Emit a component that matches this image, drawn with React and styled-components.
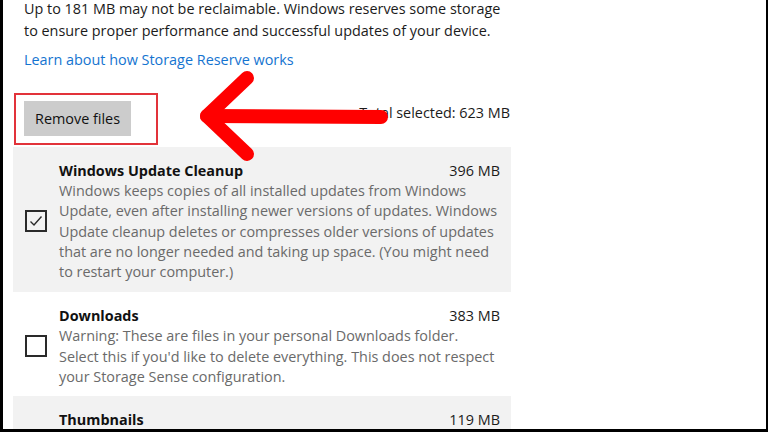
import React from "react";
import styled, { createGlobalStyle } from "styled-components";

const Global = createGlobalStyle`
  html, body { margin: 0; padding: 0; background: #fff; }
  body { font-family: "Open Sans", "Noto Sans", Arial, sans-serif; }
`;

const Frame = styled.div`
  width: 768px;
  height: 432px;
  box-sizing: border-box;
  border-left: 3px solid #000;
  border-right: 2px solid #000;
  border-bottom: 3px solid #000;
  background: #fff;
  overflow: hidden;
  position: relative;
`;

const Column = styled.div`
  width: 498px;
  margin-left: 10px;
  display: flex;
  flex-direction: column;
`;

const Intro = styled.p`
  margin: -2px 0 0;
  padding: 0 11px;
  font-size: 14.4px;
  line-height: 22px;
  color: #1b1b1b;
  white-space: nowrap;
`;

const Link = styled.a`
  margin: 7px 0 0 11px;
  font-size: 14.4px;
  line-height: 22px;
  color: #1574d0;
  text-decoration: none;
  align-self: flex-start;
`;

const ActionRow = styled.div`
  display: flex;
  justify-content: space-between;
  align-items: flex-start;
  margin-top: 22px;
`;

const Highlight = styled.div`
  margin-left: 1px;
  border: 2px solid #e2333a;
  padding: 6px 25px 7px 8px;
`;

const Button = styled.button`
  display: block;
  width: 107px;
  height: 35px;
  border: none;
  background: #cccccc;
  font-family: inherit;
  font-size: 14.4px;
  color: #111;
  padding: 0;
`;

const Total = styled.div`
  margin-top: 9px;
  margin-right: 1px;
  font-size: 14.4px;
  line-height: 22px;
  color: #1b1b1b;
  white-space: nowrap;
`;

const Item = styled.div`
  display: grid;
  grid-template-columns: 22px 1fr;
  column-gap: 12px;
  align-items: center;
  padding: ${(p) => p.$pt}px 11px ${(p) => p.$pb}px 12px;
  background: ${(p) => (p.$shaded ? "#f2f2f2" : "#fff")};
  margin-top: ${(p) => p.$mt || 0}px;
`;

const Box = styled.div`
  width: 22px;
  height: 22px;
  box-sizing: border-box;
  border: 2px solid #2a2a2a;
  display: flex;
  align-items: center;
  justify-content: center;
`;

const Body = styled.div`
  display: flex;
  flex-direction: column;
  min-height: ${(p) => p.$minH || 0}px;
`;

const Head = styled.div`
  display: flex;
  justify-content: space-between;
  align-items: baseline;
`;

const Title = styled.span`
  font-size: 14.4px;
  font-weight: 700;
  line-height: 21px;
  color: #111;
`;

const Size = styled.span`
  font-size: 14.4px;
  line-height: 21px;
  color: #1b1b1b;
`;

const Desc = styled.p`
  margin: 0;
  font-size: 14.4px;
  line-height: 20.3px;
  color: #6a6a6a;
  white-space: nowrap;
`;

const ArrowOverlay = styled.svg`
  position: absolute;
  left: 190px;
  top: 68px;
  width: 200px;
  height: 96px;
  overflow: visible;
`;

function CheckBox({ checked }) {
  return (
    <Box>
      {checked && (
        <svg width="14" height="12" viewBox="0 0 14 12">
          <path d="M1.5 6.5 L5 10 L12.5 1.5" fill="none" stroke="#2a2a2a" strokeWidth="1.4" />
        </svg>
      )}
    </Box>
  );
}

function StorageItem({ checked, title, size, lines = [], shaded, pt, pb, mt, minH }) {
  return (
    <Item $shaded={shaded} $pt={pt} $pb={pb} $mt={mt}>
      <CheckBox checked={checked} />
      <Body $minH={minH}>
        <Head>
          <Title>{title}</Title>
          <Size>{size}</Size>
        </Head>
        {lines.length > 0 && (
          <Desc>
            {lines.map((l, i) => (
              <React.Fragment key={i}>
                {i > 0 && <br />}
                {l}
              </React.Fragment>
            ))}
          </Desc>
        )}
      </Body>
    </Item>
  );
}

export default function App() {
  return (
    <>
      <Global />
      <Frame>
        <Column>
          <Intro>
            Up to 181 MB may not be reclaimable. Windows reserves some storage
            <br />
            to ensure proper performance and successful updates of your device.
          </Intro>
          <Link href="#">Learn about how Storage Reserve works</Link>
          <ActionRow>
            <Highlight>
              <Button>Remove files</Button>
            </Highlight>
            <Total>Total selected: 623 MB</Total>
          </ActionRow>
          <StorageItem
            shaded
            checked
            pt={13}
            pb={10}
            mt={2}
            title="Windows Update Cleanup"
            size="396 MB"
            lines={[
              "Windows keeps copies of all installed updates from Windows",
              "Update, even after installing newer versions of updates. Windows",
              "Update cleanup deletes or compresses older versions of updates",
              "that are no longer needed and taking up space. (You might need",
              "to restart your computer.)",
            ]}
          />
          <StorageItem
            pt={13}
            pb={9}
            title="Downloads"
            size="383 MB"
            lines={[
              "Warning: These are files in your personal Downloads folder.",
              "Select this if you'd like to delete everything. This does not respect",
              "your Storage Sense configuration.",
            ]}
          />
          <StorageItem
            shaded
            pt={13}
            pb={10}
            minH={100}
            title="Thumbnails"
            size="119 MB"
          />
        </Column>
        <ArrowOverlay viewBox="190 68 200 96">
          <g fill="none" stroke="#ff0000" strokeWidth="14" strokeLinecap="round" strokeLinejoin="round">
            <path d="M378 117 L204 116" />
            <path d="M244 78 L204 116 L244 154" />
          </g>
        </ArrowOverlay>
      </Frame>
    </>
  );
}
